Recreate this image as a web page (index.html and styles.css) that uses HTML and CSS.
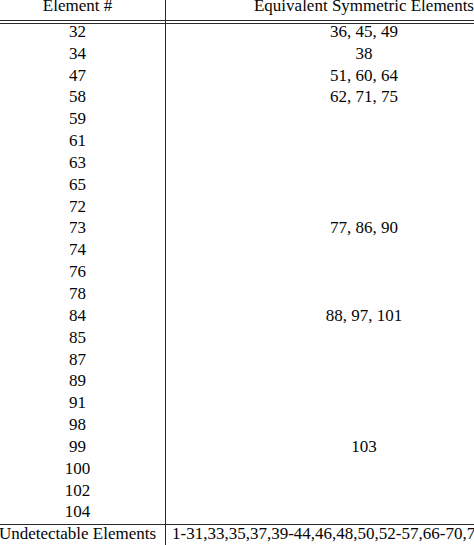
FILE: index.html
```html
<!DOCTYPE html>
<html>
<head>
<meta charset="utf-8">
<link rel="stylesheet" href="styles.css">
</head>
<body>
<table class="sym">
  <colgroup><col class="c1"><col class="c2"></colgroup>
  <thead>
    <tr><th class="k">Element #</th><th class="v">Equivalent Symmetric Elements</th></tr>
    <tr class="rule"><td class="k"></td><td class="v"></td></tr>
  </thead>
  <tbody>
    <tr><td class="k">32</td><td class="v">36, 45, 49</td></tr>
    <tr><td class="k">34</td><td class="v">38</td></tr>
    <tr><td class="k">47</td><td class="v">51, 60, 64</td></tr>
    <tr><td class="k">58</td><td class="v">62, 71, 75</td></tr>
    <tr><td class="k">59</td><td class="v"></td></tr>
    <tr><td class="k">61</td><td class="v"></td></tr>
    <tr><td class="k">63</td><td class="v"></td></tr>
    <tr><td class="k">65</td><td class="v"></td></tr>
    <tr><td class="k">72</td><td class="v"></td></tr>
    <tr><td class="k">73</td><td class="v">77, 86, 90</td></tr>
    <tr><td class="k">74</td><td class="v"></td></tr>
    <tr><td class="k">76</td><td class="v"></td></tr>
    <tr><td class="k">78</td><td class="v"></td></tr>
    <tr><td class="k">84</td><td class="v">88, 97, 101</td></tr>
    <tr><td class="k">85</td><td class="v"></td></tr>
    <tr><td class="k">87</td><td class="v"></td></tr>
    <tr><td class="k">89</td><td class="v"></td></tr>
    <tr><td class="k">91</td><td class="v"></td></tr>
    <tr><td class="k">98</td><td class="v"></td></tr>
    <tr><td class="k">99</td><td class="v">103</td></tr>
    <tr><td class="k">100</td><td class="v"></td></tr>
    <tr><td class="k">102</td><td class="v"></td></tr>
    <tr class="last"><td class="k">104</td><td class="v"></td></tr>
    <tr class="foot"><td class="k">Undetectable Elements</td><td class="v left">1-31,33,35,37,39-44,46,48,50,52-57,66-70,79-83,92-96,105-</td></tr>
  </tbody>
</table>
</body>
</html>
```
FILE: styles.css
```css
html, body {
  margin: 0;
  padding: 0;
  overflow: hidden;
  background: #ffffff;
}
.sym {
  margin: -2px 0 0 -10px;
  border-collapse: separate;
  border-spacing: 0;
  table-layout: fixed;
  width: 572px;
  font-family: "Liberation Serif", "Times New Roman", serif;
  font-size: 17px;
  color: #050505;
}
.c1 { width: 176px; }
.c2 { width: 396px; }
.sym th, .sym td {
  font-weight: normal;
  text-align: center;
  line-height: 16.6px;
  padding: 0 0 5.25px 0;
  white-space: nowrap;
  overflow: visible;
}
.sym .k {
  border-right: 1px solid #2a2a2a;
}
.sym .rule td {
  height: 2px;
  padding: 0;
  line-height: 0;
  border-top: 1px solid #2a2a2a;
  border-bottom: 1px solid #2a2a2a;
}
.sym .last td {
  padding-bottom: 3.4px;
}
.sym .foot td {
  border-top: 1px solid #2a2a2a;
  padding-top: 0.5px;
}
.sym .left {
  text-align: left;
  padding-left: 6px;
}
```
